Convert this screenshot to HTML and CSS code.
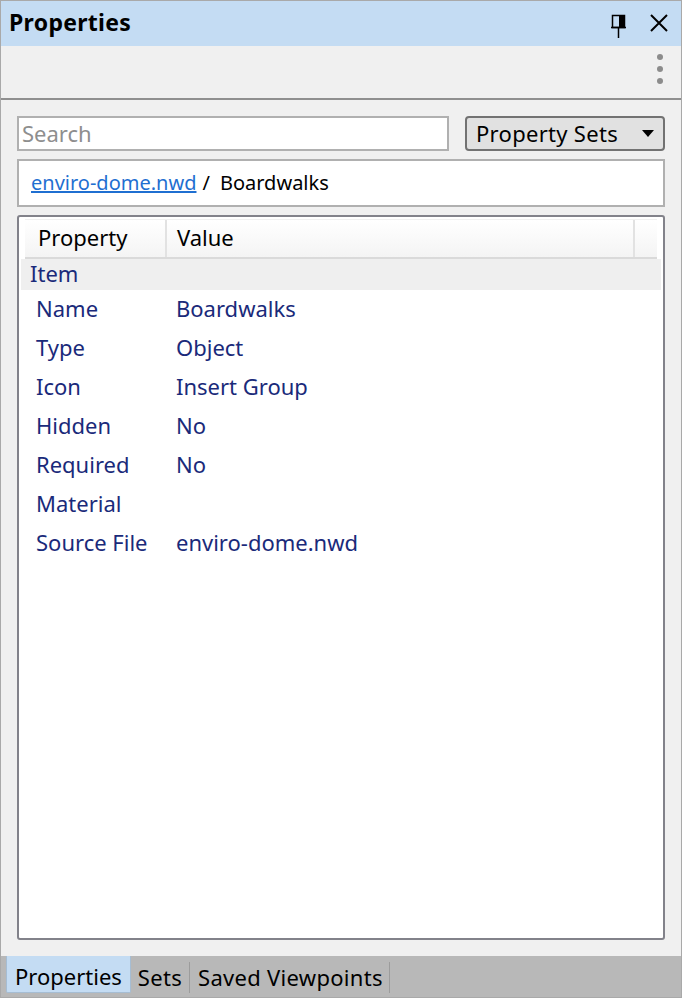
FILE: index.html
```html
<!DOCTYPE html>
<html lang="en">
<head>
    <meta charset="UTF-8">
    <meta name="viewport" content="width=device-width, initial-scale=1.0">
    <title>Properties</title>
    <link rel="stylesheet" href="styles.css">
</head>
<body>
    <div class="panel">
        <div class="titlebar">
            <span class="title">Properties</span>
            <div class="title-buttons">
                <svg class="pin" width="20" height="26" viewBox="0 0 20 26">
                    <rect x="4.5" y="1.5" width="12" height="12" fill="none" stroke="#000" stroke-width="1.5"/>
                    <rect x="11" y="1.5" width="5.5" height="12" fill="#000"/>
                    <line x1="3" y1="13.5" x2="18" y2="13.5" stroke="#000" stroke-width="1.5"/>
                    <line x1="10.5" y1="13.5" x2="10.5" y2="24" stroke="#000" stroke-width="1.5"/>
                </svg>
                <svg class="close" width="20" height="20" viewBox="0 0 20 20">
                    <path d="M2 2 L18 18 M18 2 L2 18" stroke="#000" stroke-width="2" fill="none"/>
                </svg>
            </div>
        </div>

        <div class="toolbar">
            <div class="more">
                <span class="dot"></span>
                <span class="dot"></span>
                <span class="dot"></span>
            </div>
        </div>

        <div class="content">
            <div class="search-row">
                <input class="search" type="text" placeholder="Search">
                <div class="dropdown">
                    <span>Property Sets</span>
                    <span class="arrow"></span>
                </div>
            </div>

            <div class="breadcrumb">
                <a href="#" class="crumb-link">enviro-dome.nwd</a>
                <span class="crumb-sep">/</span>
                <span>Boardwalks</span>
            </div>

            <div class="table-box">
                <div class="table-head">
                    <div class="head-cell head-prop">Property</div>
                    <div class="head-cell head-value">Value</div>
                    <div class="head-cell head-end"></div>
                </div>
                <div class="group-row">Item</div>
                <div class="row"><span class="label">Name</span><span class="value">Boardwalks</span></div>
                <div class="row"><span class="label">Type</span><span class="value">Object</span></div>
                <div class="row"><span class="label">Icon</span><span class="value">Insert Group</span></div>
                <div class="row"><span class="label">Hidden</span><span class="value">No</span></div>
                <div class="row"><span class="label">Required</span><span class="value">No</span></div>
                <div class="row"><span class="label">Material</span><span class="value"></span></div>
                <div class="row"><span class="label">Source File</span><span class="value">enviro-dome.nwd</span></div>
            </div>
        </div>

        <div class="tabs">
            <div class="tab active">Properties</div>
            <div class="tab">Sets</div>
            <div class="tab">Saved Viewpoints</div>
        </div>
    </div>
</body>
</html>
```

FILE: styles.css
```css
:root {
    --title-bg: #c4dcf3;
    --panel-bg: #f0f0f0;
    --border: #a9a9a9;
    --navy: #1a2a7a;
    --link: #1f6fd1;
}

html, body {
    margin: 0;
    padding: 0;
}

body {
    font-family: "Noto Sans", "Open Sans", sans-serif;
    font-size: 22px;
    color: #000;
}

.panel {
    width: 682px;
    height: 998px;
    box-sizing: border-box;
    border: 1px solid var(--border);
    display: flex;
    flex-direction: column;
    background: var(--panel-bg);
}

.titlebar {
    height: 45px;
    box-sizing: border-box;
    flex-shrink: 0;
    background: var(--title-bg);
    display: flex;
    align-items: center;
    justify-content: space-between;
    padding: 0 12px 4px 8px;
}

.title {
    font-weight: 700;
    font-size: 23px;
    letter-spacing: 0.3px;
}

.title-buttons {
    display: flex;
    align-items: center;
    gap: 21px;
}

.pin {
    margin-top: 10px;
}

.close {
    margin-top: 3px;
}

.toolbar {
    height: 52px;
    flex-shrink: 0;
    border-bottom: 2px solid #8f8f8f;
    display: flex;
    justify-content: flex-end;
    padding-right: 18px;
}

.more {
    display: flex;
    flex-direction: column;
    gap: 6px;
    padding-top: 8px;
}

.dot {
    width: 6px;
    height: 6px;
    border-radius: 50%;
    background: #8c8c8c;
}

.content {
    flex: 1;
    display: flex;
    flex-direction: column;
    gap: 8px;
    padding: 16px;
    min-height: 0;
}

.search-row {
    display: flex;
    gap: 16px;
    height: 35px;
}

.search {
    flex: 1;
    box-sizing: border-box;
    height: 35px;
    border: 2px solid #b0b0b0;
    padding: 0 3px 2px;
    font-family: inherit;
    font-size: 22px;
    outline: none;
}

.search::placeholder {
    color: #8e8e8e;
}

.dropdown {
    width: 200px;
    box-sizing: border-box;
    height: 35px;
    background: #e1e1e1;
    border: 2px solid #727272;
    border-radius: 4px;
    display: flex;
    align-items: center;
    justify-content: space-between;
    padding: 0 9px 2px;
    letter-spacing: 0.3px;
}

.arrow {
    width: 0;
    height: 0;
    border-left: 6px solid transparent;
    border-right: 6px solid transparent;
    border-top: 7px solid #000;
    margin-top: 2px;
}

.breadcrumb {
    height: 48px;
    box-sizing: border-box;
    background: #fff;
    border: 2px solid #b0b0b0;
    display: flex;
    align-items: center;
    padding: 0 12px 2px;
    font-size: 20px;
}

.crumb-link {
    color: var(--link);
    text-decoration: underline;
}

.crumb-sep {
    margin: 0 10px 0 6px;
}

.table-box {
    flex: 1;
    background: #fff;
    border: 2px solid #82828a;
    border-radius: 3px;
    padding: 2px;
}

.table-head {
    display: flex;
    height: 37px;
    margin: 0 4px;
    border-top: 1px solid #f0f0f0;
    border-bottom: 2px solid #dadada;
    background: linear-gradient(#ffffff, #f4f4f4);
}

.head-cell {
    display: flex;
    align-items: center;
    padding-bottom: 3px;
}

.head-prop {
    width: 127px;
    padding-left: 13px;
    border-right: 2px solid #e2e2e2;
}

.head-value {
    flex: 1;
    padding-left: 10px;
    border-right: 2px solid #e2e2e2;
}

.head-end {
    width: 22px;
}

.group-row {
    height: 31px;
    box-sizing: border-box;
    display: flex;
    align-items: center;
    background: #efefef;
    padding: 0 0 3px 9px;
    color: var(--navy);
}

.row {
    display: flex;
    align-items: center;
    height: 39px;
    box-sizing: border-box;
    padding-bottom: 3px;
    color: var(--navy);
}

.label {
    width: 140px;
    padding-left: 15px;
}

.tabs {
    height: 41px;
    flex-shrink: 0;
    background: #b8b8b8;
    display: flex;
    padding-left: 5px;
}

.tab {
    height: 37px;
    box-sizing: border-box;
    display: flex;
    align-items: center;
    padding: 4px 7px 0;
    position: relative;
    letter-spacing: 0.3px;
}

.tab + .tab::before {
    content: '';
    position: absolute;
    left: 0;
    top: 6px;
    bottom: 0;
    width: 1px;
    background: #9c9c9c;
}

.tab:last-child::after {
    content: '';
    position: absolute;
    right: 0;
    top: 6px;
    bottom: 0;
    width: 1px;
    background: #9c9c9c;
}

.tab:last-child {
    padding: 4px 7px 0 9px;
}

.tab.active {
    background: var(--title-bg);
    border: 1px solid #a6bdd3;
    border-top: none;
    border-radius: 0 0 2px 2px;
    padding: 4px 8px 0;
    letter-spacing: 0;
}

.tab.active + .tab::before {
    display: none;
}
```
